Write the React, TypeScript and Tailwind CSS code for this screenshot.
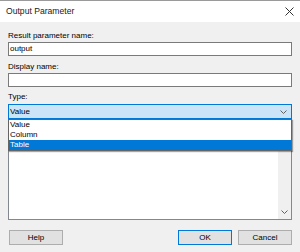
import React from 'react';

const font = { fontFamily: '"Liberation Sans", Arial, sans-serif' };

function Chevron({ className }: { className?: string }) {
    return (
        <svg width="7" height="4" viewBox="0 0 7 4" className={className}>
            <path d="M0.5 0.5 L3.5 3.5 L6.5 0.5" fill="none" stroke="#606060" strokeWidth="1" />
        </svg>
    );
}

export default function App() {
    const items = ['Value', 'Column', 'Table'];

    return (
        <div className="w-[300px] h-[252px] flex flex-col bg-[#f0f0f0] text-black overflow-hidden" style={font}>
            {/* Title bar */}
            <div className="h-[22px] shrink-0 bg-white border-t border-[#9a9a9a] flex items-center justify-between pl-[6px] pr-[6px]">
                <span className="text-[8.6px] leading-none text-[#1a1a1a]">Output Parameter</span>
                <svg width="9" height="9" viewBox="0 0 9 9">
                    <path d="M0.5 0.5 L8.5 8.5 M8.5 0.5 L0.5 8.5" stroke="#333" strokeWidth="1" />
                </svg>
            </div>

            {/* Body */}
            <div className="flex-1 flex flex-col px-[8px] pt-[9px] pb-[7px]">
                <label className="text-[8px] leading-[10px] h-[10px]">Result parameter name:</label>
                <div className="mt-[1px] h-[14px] bg-white border border-[#7a7a7a] flex items-center px-[1px] text-[8px]">output</div>

                <label className="mt-[6px] text-[8px] leading-[10px] h-[10px]">Display name:</label>
                <div className="mt-[1px] h-[14px] bg-white border border-[#7a7a7a]" />

                <label className="mt-[5px] text-[8px] leading-[10px] h-[10px]">Type:</label>
                <div className="relative mt-[2px]">
                    <div className="h-[15px] bg-[#cce4f7] border border-[#0078d7] flex items-center justify-between px-[1px] text-[8px]">
                        <span>Value</span>
                        <Chevron className="mr-[3px]" />
                    </div>

                    {/* Dropdown list */}
                    <div className="absolute left-0 right-0 top-[15px] z-10 bg-white border border-[#646464] shadow-[1px_1px_1px_rgba(0,0,0,0.35)] flex flex-col">
                        {items.map((it) => (
                            <div
                                key={it}
                                className={
                                    it === 'Table'
                                        ? 'h-[10px] leading-[10px] text-[8px] px-[1px] bg-[#0078d7] text-white'
                                        : 'h-[10px] leading-[10px] text-[8px] px-[1px]'
                                }
                            >
                                {it}
                            </div>
                        ))}
                    </div>
                </div>

                {/* Big list box */}
                <div className="mt-[6px] flex-1 bg-white border border-[#828790] flex justify-end">
                    <div className="w-[13px] bg-[#f0f0f0] flex flex-col justify-end items-center pb-[5px]">
                        <Chevron />
                    </div>
                </div>

                {/* Buttons */}
                <div className="mt-[10px] h-[15px] flex items-stretch">
                    <button className="ml-[1px] w-[54px] bg-[#e1e1e1] border border-[#adadad] text-[8px] leading-none">Help</button>
                    <div className="flex-1" />
                    <button className="w-[54px] bg-[#e1e1e1] border border-[#0078d7] text-[8px] leading-none">OK</button>
                    <button className="ml-[6px] w-[54px] bg-[#e1e1e1] border border-[#adadad] text-[8px] leading-none">Cancel</button>
                </div>
            </div>
        </div>
    );
}
